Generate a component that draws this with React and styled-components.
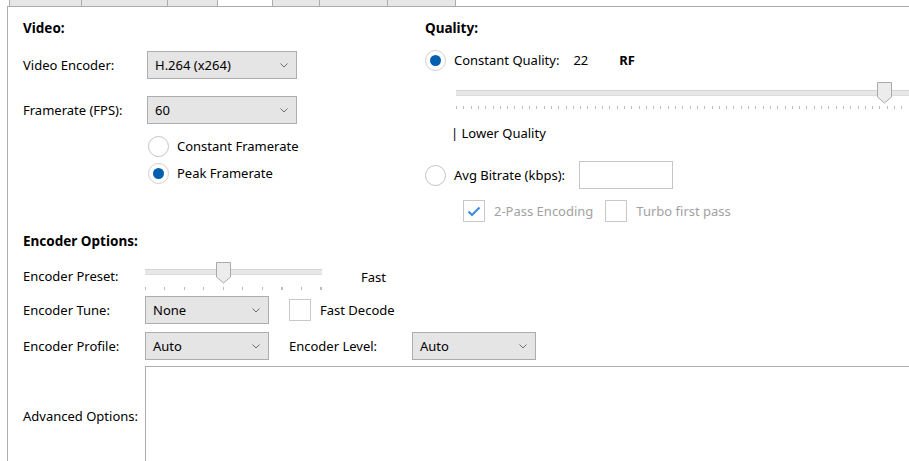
import React from "react";
import styled, { createGlobalStyle } from "styled-components";

const GlobalStyle = createGlobalStyle`
  html, body {
    margin: 0;
    padding: 0;
    background: #ffffff;
    overflow: hidden;
  }
  body {
    font-family: "Noto Sans", "Open Sans", sans-serif;
    font-size: 13px;
    color: #000000;
  }
`;

const Page = styled.div`
  width: 909px;
  height: 461px;
  overflow: hidden;
  background: #ffffff;
`;

const TabStrip = styled.div`
  display: flex;
  height: 6px;
  padding-left: 9px;
`;

const Tab = styled.div`
  width: ${(p) => p.w}px;
  height: 6px;
  box-sizing: border-box;
  background: ${(p) => (p.active ? "#ffffff" : "#e6e6e6")};
  border-left: 1px solid #acacac;
  border-right: ${(p) => (p.last ? "1px solid #acacac" : "none")};
`;

const Panel = styled.div`
  margin-left: 7px;
  border-left: 1px solid #acacac;
  border-top: 1px solid #acacac;
  padding: 13px 0 0 15px;
  height: 460px;
  box-sizing: border-box;
`;

const Top = styled.div`
  display: grid;
  grid-template-columns: 402px 1fr;
`;

const Column = styled.div`
  display: flex;
  flex-direction: column;
`;

const Heading = styled.div`
  font-weight: 700;
  font-size: 13.5px;
  line-height: 16px;
  height: 16px;
`;

const FormRow = styled.div`
  display: grid;
  grid-template-columns: ${(p) => p.label || 124}px auto;
  align-items: center;
  height: 28px;
  margin-top: ${(p) => p.gap || 0}px;
`;

const Label = styled.span`
  line-height: 16px;
  white-space: nowrap;
`;

const Inline = styled.div`
  display: flex;
  align-items: center;
  height: ${(p) => p.h || 22}px;
  margin-top: ${(p) => p.gap || 0}px;
  padding-left: ${(p) => p.indent || 0}px;
`;

const SelectBox = styled.div`
  width: ${(p) => p.w}px;
  height: 28px;
  box-sizing: border-box;
  border: 1px solid #adadad;
  background: #e5e5e5;
  display: flex;
  align-items: center;
  justify-content: space-between;
  padding: 0 8px 0 7px;
`;

const RadioCircle = styled.span`
  width: 21px;
  height: 21px;
  box-sizing: border-box;
  border-radius: 50%;
  border: 1px solid ${(p) => (p.checked ? "#cfcfcf" : "#c3c3c3")};
  background: #ffffff;
  display: inline-flex;
  align-items: center;
  justify-content: center;
  flex-shrink: 0;
  margin-right: ${(p) => p.mr || 8}px;
  &::after {
    content: "";
    display: ${(p) => (p.checked ? "block" : "none")};
    width: 11px;
    height: 11px;
    border-radius: 50%;
    background: #005fb0;
  }
`;

const CheckSquare = styled.span`
  width: 22px;
  height: 22px;
  box-sizing: border-box;
  border: 1px solid #c8c8c8;
  background: #ffffff;
  display: inline-flex;
  align-items: center;
  justify-content: center;
  flex-shrink: 0;
  margin-right: ${(p) => p.mr || 9}px;
`;

const Dim = styled.span`
  color: #a2a2a2;
  margin-right: ${(p) => p.mr || 0}px;
`;

const Value = styled.span`
  margin-left: ${(p) => p.ml || 0}px;
  font-weight: ${(p) => (p.bold ? 700 : 400)};
`;

const SliderBox = styled.div`
  position: relative;
  width: ${(p) => (p.w ? `${p.w}px` : "100%")};
  height: 28px;
  flex-shrink: 0;
`;

const Track = styled.div`
  position: absolute;
  left: 0;
  right: 0;
  top: ${(p) => p.top}px;
  height: 4px;
  background: #e7e7e7;
  border-top: 1px solid #d4d4d4;
  border-bottom: 1px solid #dcdcdc;
`;

const Ticks = styled.div`
  position: absolute;
  left: 0;
  right: 0;
  top: ${(p) => p.top}px;
  height: 3px;
  background: repeating-linear-gradient(
    to right,
    #bdbdbd 0,
    #bdbdbd 1px,
    transparent 1px,
    transparent ${(p) => p.step}px
  );
`;

const Thumb = styled.svg`
  position: absolute;
  top: 0;
  left: ${(p) => p.x}px;
`;

const QualityBlock = styled.div`
  margin: 11px 0 0 31px;
`;

const LowerQuality = styled.div`
  margin: 15px 0 0 26px;
  line-height: 16px;
`;

const TextBox = styled.div`
  width: 94px;
  height: 28px;
  box-sizing: border-box;
  border: 1px solid #c6c6c6;
  background: #ffffff;
`;

const EncoderSection = styled.div`
  margin-top: 11px;
  display: flex;
  flex-direction: column;
`;

const EncRow = styled.div`
  display: grid;
  grid-template-columns: 122px 1fr;
  align-items: center;
  height: 28px;
  margin-top: ${(p) => p.gap}px;
`;

const Controls = styled.div`
  display: flex;
  align-items: center;
  gap: ${(p) => p.gap || 0}px;
`;

const SliderLabel = styled.span`
  margin-left: 39px;
  margin-top: 1px;
`;

const AdvRow = styled.div`
  display: grid;
  grid-template-columns: 122px 1fr;
  align-items: center;
  height: 100px;
  margin-top: 6px;
`;

const TextArea = styled.div`
  height: 100px;
  box-sizing: border-box;
  border: 1px solid #adadad;
  border-right: none;
  background: #ffffff;
`;

const Chevron = () => (
  <svg width="8" height="5" viewBox="0 0 8 5">
    <polyline points="0.5,0.5 4,4 7.5,0.5" fill="none" stroke="#6f6f6f" strokeWidth="1" />
  </svg>
);

const Select = ({ w, value }) => (
  <SelectBox w={w}>
    <span>{value}</span>
    <Chevron />
  </SelectBox>
);

const ThumbShape = ({ x }) => (
  <Thumb x={x} width="15" height="22" viewBox="0 0 15 22">
    <path d="M0.5,0.5 H14.5 V15 L7.5,21 L0.5,15 Z" fill="#ececec" stroke="#a9a9a9" strokeWidth="1" />
  </Thumb>
);

const Slider = ({ w, thumb, step, trackTop, tickTop }) => (
  <SliderBox w={w}>
    <Track top={trackTop} />
    <Ticks top={tickTop} step={step} />
    <ThumbShape x={thumb} />
  </SliderBox>
);

const Check = () => (
  <svg width="14" height="11" viewBox="0 0 14 11">
    <polyline points="1.5,5.5 5,9 12.5,1.5" fill="none" stroke="#3f8fdc" strokeWidth="2.2" />
  </svg>
);

const tabs = [72, 86, 50, 55, 47, 68, 69];

export default function App() {
  return (
    <Page>
      <GlobalStyle />
      <TabStrip>
        {tabs.map((w, i) => (
          <Tab key={i} w={w} active={i === 3} last={i === tabs.length - 1} />
        ))}
      </TabStrip>
      <Panel>
        <Top>
          <Column>
            <Heading>Video:</Heading>
            <FormRow gap={15}>
              <Label>Video Encoder:</Label>
              <Select w={150} value="H.264 (x264)" />
            </FormRow>
            <FormRow gap={17}>
              <Label>Framerate (FPS):</Label>
              <Select w={150} value="60" />
            </FormRow>
            <Inline indent={125} gap={11}>
              <RadioCircle />
              <Label>Constant Framerate</Label>
            </Inline>
            <Inline indent={125} gap={5}>
              <RadioCircle checked />
              <Label>Peak Framerate</Label>
            </Inline>
          </Column>
          <Column>
            <Heading>Quality:</Heading>
            <Inline gap={13}>
              <RadioCircle checked />
              <Label>Constant Quality:</Label>
              <Value ml={14}>22</Value>
              <Value ml={31} bold>RF</Value>
            </Inline>
            <QualityBlock>
              <Slider thumb={421} step={7.3} trackTop={8} tickTop={24} />
            </QualityBlock>
            <LowerQuality>| Lower Quality</LowerQuality>
            <Inline h={28} gap={20}>
              <RadioCircle />
              <Label>Avg Bitrate (kbps):</Label>
              <Value ml={14}>
                <TextBox />
              </Value>
            </Inline>
            <Inline indent={38} gap={11}>
              <CheckSquare>
                <Check />
              </CheckSquare>
              <Dim mr={12}>2-Pass Encoding</Dim>
              <CheckSquare />
              <Dim>Turbo first pass</Dim>
            </Inline>
          </Column>
        </Top>
        <EncoderSection>
          <Heading>Encoder Options:</Heading>
          <EncRow gap={13}>
            <Label>Encoder Preset:</Label>
            <Controls>
              <Slider w={177} thumb={71} step={19.5} trackTop={7} tickTop={25} />
              <SliderLabel>Fast</SliderLabel>
            </Controls>
          </EncRow>
          <EncRow gap={6}>
            <Label>Encoder Tune:</Label>
            <Controls gap={20}>
              <Select w={124} value="None" />
              <Inline>
                <CheckSquare />
                <Label>Fast Decode</Label>
              </Inline>
            </Controls>
          </EncRow>
          <EncRow gap={8}>
            <Label>Encoder Profile:</Label>
            <Controls gap={20}>
              <Select w={124} value="Auto" />
              <FormRow label={123}>
                <Label>Encoder Level:</Label>
                <Select w={124} value="Auto" />
              </FormRow>
            </Controls>
          </EncRow>
          <AdvRow>
            <Label>Advanced Options:</Label>
            <TextArea />
          </AdvRow>
        </EncoderSection>
      </Panel>
    </Page>
  );
}
